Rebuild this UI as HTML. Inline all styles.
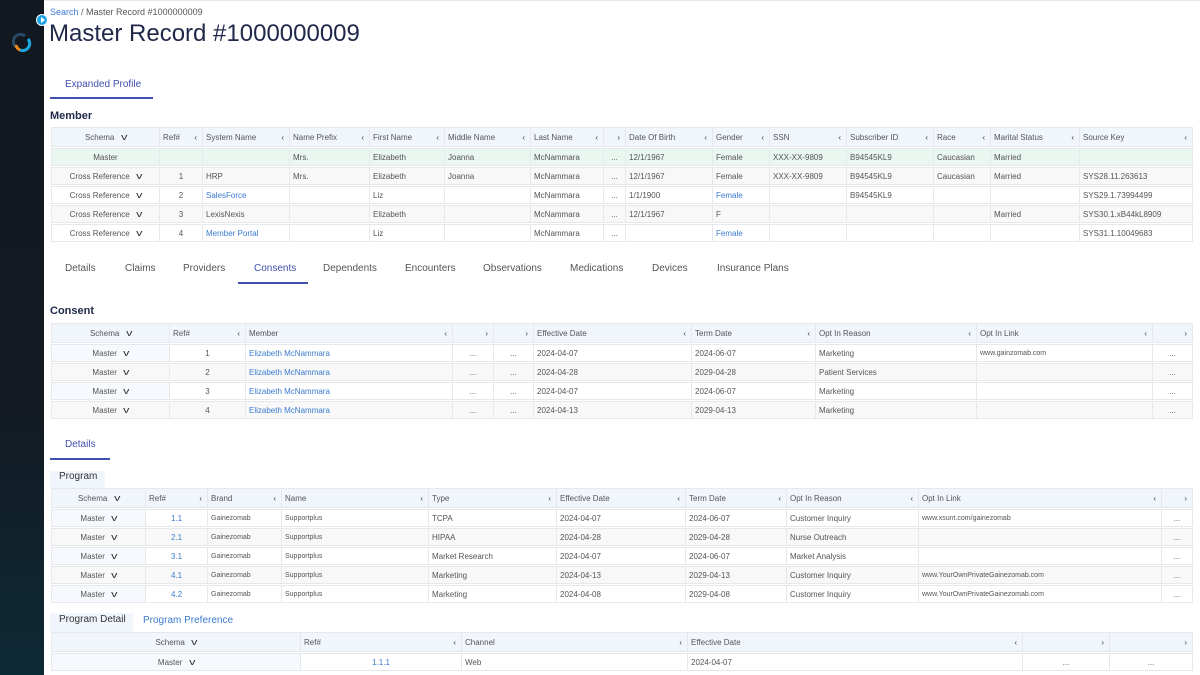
<!DOCTYPE html><html><head><meta charset="utf-8"><style>
*{margin:0;padding:0;box-sizing:border-box}
body{width:1200px;height:675px;overflow:hidden;background:#fff;font-family:"Liberation Sans",sans-serif;color:#444;position:relative}
.side{position:absolute;left:0;top:0;width:44px;height:675px;background:linear-gradient(#121820 0,#131a22 60%,#10222c 80%,#0c2a36 100%)}
.abs{position:absolute;white-space:nowrap}
table{position:absolute;left:51px;width:1142px;border-collapse:separate;border-spacing:0 1px;table-layout:fixed;font-size:8px}
td,th{height:18px;border-top:1px solid #e6e8eb;border-bottom:1px solid #e6e8eb;border-right:1px solid #e6e8eb;padding:0 3px;font-weight:normal;text-align:left;white-space:nowrap;overflow:hidden;color:#555}
th{height:20px;background:#f1f6fc;color:#555;position:relative}
td:first-child,th:first-child{border-left:1px solid #e6e8eb;text-align:center}
tr.g td{background:#eaf6f0}
tr.a td{background:#f8f8f8}
tr.b td{background:#fff}
tr.c td:first-child,tr.c td.l{background:#f6f9fd}
.r{text-align:right;padding-right:6px}
.c{text-align:center}
.lk{color:#3b7bd0}
.ar{position:absolute;right:5px;top:5px;font-size:8px;color:#444}
.tab{position:absolute;top:263px;font-size:10px;color:#555}
.v{display:inline-block;font-size:9px;margin-left:5px;transform:scaleX(1.4);color:#333}
</style></head><body>
<div class="side">
<svg style="position:absolute;left:12px;top:33px" width="20" height="20" viewBox="0 0 20 20"><path d="M4 14A7 7 0 0 1 13 3" stroke="#2a4a66" stroke-width="3" fill="none"/><path d="M16 6A7 7 0 0 1 8 17" stroke="#1aa8e0" stroke-width="3" fill="none"/><path d="M8 17A7 7 0 0 1 4 12" stroke="#f08a1c" stroke-width="3" fill="none"/></svg>
</div>
<div class="abs" style="left:36px;top:14px;width:12px;height:12px;border-radius:6px;background:#1ca3e6;border:1px solid #fff"></div>
<div class="abs" style="left:41px;top:17px;width:0;height:0;border-left:4px solid #fff;border-top:3px solid transparent;border-bottom:3px solid transparent"></div>
<div class="abs" style="left:44px;top:0;width:1156px;height:1px;background:#e8e8e8"></div>
<div class="abs" style="left:50px;top:7px;font-size:9px;color:#555"><span style="color:#3b7bd0">Search</span> / Master Record #1000000009</div>
<div class="abs" style="left:49px;top:20px;font-size:24px;color:#1f2848">Master Record #1000000009</div>
<div class="abs" style="left:65px;top:79px;font-size:10px;color:#4050b0">Expanded Profile</div>
<div class="abs" style="left:50px;top:97px;width:103px;height:2px;background:#4050b0"></div>
<div class="abs" style="left:50px;top:110px;font-size:11px;font-weight:bold;color:#1f2848">Member</div>

<table style="top:126px">
<colgroup><col style="width:109px"><col style="width:43px"><col style="width:87px"><col style="width:80px"><col style="width:75px"><col style="width:86px"><col style="width:73px"><col style="width:22px"><col style="width:87px"><col style="width:57px"><col style="width:77px"><col style="width:87px"><col style="width:57px"><col style="width:89px"><col style="width:113px"></colgroup>
<tr><th>Schema <span class="v">v</span></th><th>Ref#<span class="ar">‹</span></th><th>System Name<span class="ar">‹</span></th><th>Name Prefix<span class="ar">‹</span></th><th>First Name<span class="ar">‹</span></th><th>Middle Name<span class="ar">‹</span></th><th>Last Name<span class="ar">‹</span></th><th><span class="ar">›</span></th><th>Date Of Birth<span class="ar">‹</span></th><th>Gender<span class="ar">‹</span></th><th>SSN<span class="ar">‹</span></th><th>Subscriber ID<span class="ar">‹</span></th><th>Race<span class="ar">‹</span></th><th>Marital Status<span class="ar">‹</span></th><th>Source Key<span class="ar">‹</span></th></tr>
<tr class="g"><td>Master</td><td></td><td></td><td>Mrs.</td><td>Elizabeth</td><td>Joanna</td><td>McNammara</td><td class="c">...</td><td>12/1/1967</td><td>Female</td><td>XXX-XX-9809</td><td>B94545KL9</td><td>Caucasian</td><td>Married</td><td></td></tr>
<tr class="a"><td>Cross Reference <span class="v">v</span></td><td class="c">1</td><td>HRP</td><td>Mrs.</td><td>Elizabeth</td><td>Joanna</td><td>McNammara</td><td class="c">...</td><td>12/1/1967</td><td>Female</td><td>XXX-XX-9809</td><td>B94545KL9</td><td>Caucasian</td><td>Married</td><td>SYS28.11.263613</td></tr>
<tr class="b"><td>Cross Reference <span class="v">v</span></td><td class="c">2</td><td class="lk">SalesForce</td><td></td><td>Liz</td><td></td><td>McNammara</td><td class="c">...</td><td>1/1/1900</td><td class="lk">Female</td><td></td><td>B94545KL9</td><td></td><td></td><td>SYS29.1.73994499</td></tr>
<tr class="a"><td>Cross Reference <span class="v">v</span></td><td class="c">3</td><td>LexisNexis</td><td></td><td>Elizabeth</td><td></td><td>McNammara</td><td class="c">...</td><td>12/1/1967</td><td>F</td><td></td><td></td><td></td><td>Married</td><td>SYS30.1.xB44kL8909</td></tr>
<tr class="b"><td>Cross Reference <span class="v">v</span></td><td class="c">4</td><td class="lk">Member Portal</td><td></td><td>Liz</td><td></td><td>McNammara</td><td class="c">...</td><td></td><td class="lk">Female</td><td></td><td></td><td></td><td></td><td>SYS31.1.10049683</td></tr>
</table>

<div class="tab" style="left:65px">Details</div>
<div class="tab" style="left:125px">Claims</div>
<div class="tab" style="left:183px">Providers</div>
<div class="tab" style="left:254px;color:#4050b0">Consents</div>
<div class="tab" style="left:323px">Dependents</div>
<div class="tab" style="left:405px">Encounters</div>
<div class="tab" style="left:483px">Observations</div>
<div class="tab" style="left:570px">Medications</div>
<div class="tab" style="left:652px">Devices</div>
<div class="tab" style="left:717px">Insurance Plans</div>
<div class="abs" style="left:238px;top:282px;width:70px;height:2px;background:#4050b0"></div>

<div class="abs" style="left:50px;top:305px;font-size:11px;font-weight:bold;color:#1f2848">Consent</div>
<table style="top:322px">
<colgroup><col style="width:119px"><col style="width:76px"><col style="width:207px"><col style="width:41px"><col style="width:40px"><col style="width:158px"><col style="width:124px"><col style="width:161px"><col style="width:176px"><col style="width:40px"></colgroup>
<tr><th>Schema <span class="v">v</span></th><th>Ref#<span class="ar">‹</span></th><th>Member<span class="ar">‹</span></th><th><span class="ar">›</span></th><th><span class="ar">›</span></th><th>Effective Date<span class="ar">‹</span></th><th>Term Date<span class="ar">‹</span></th><th>Opt In Reason<span class="ar">‹</span></th><th>Opt In Link<span class="ar">‹</span></th><th><span class="ar">›</span></th></tr>
<tr class="b c"><td>Master <span class="v">v</span></td><td class="c">1</td><td class="lk">Elizabeth McNammara</td><td class="c">...</td><td class="c">...</td><td>2024-04-07</td><td>2024-06-07</td><td>Marketing</td><td style="font-size:7px">www.gainzomab.com</td><td class="c">...</td></tr>
<tr class="a"><td>Master <span class="v">v</span></td><td class="c">2</td><td class="lk">Elizabeth McNammara</td><td class="c">...</td><td class="c">...</td><td>2024-04-28</td><td>2029-04-28</td><td>Patient Services</td><td></td><td class="c">...</td></tr>
<tr class="b c"><td>Master <span class="v">v</span></td><td class="c">3</td><td class="lk">Elizabeth McNammara</td><td class="c">...</td><td class="c">...</td><td>2024-04-07</td><td>2024-06-07</td><td>Marketing</td><td></td><td class="c">...</td></tr>
<tr class="a"><td>Master <span class="v">v</span></td><td class="c">4</td><td class="lk">Elizabeth McNammara</td><td class="c">...</td><td class="c">...</td><td>2024-04-13</td><td>2029-04-13</td><td>Marketing</td><td></td><td class="c">...</td></tr>
</table>

<div class="abs" style="left:65px;top:439px;font-size:10px;color:#4050b0">Details</div>
<div class="abs" style="left:50px;top:458px;width:60px;height:2px;background:#4050b0"></div>
<div class="abs" style="left:50px;top:471px;width:55px;height:17px;background:#f1f6fc"></div>
<div class="abs" style="left:59px;top:471px;font-size:10px;color:#333">Program</div>
<table style="top:487px">
<colgroup><col style="width:95px"><col style="width:62px"><col style="width:74px"><col style="width:147px"><col style="width:128px"><col style="width:129px"><col style="width:101px"><col style="width:132px"><col style="width:243px"><col style="width:31px"></colgroup>
<tr><th>Schema <span class="v">v</span></th><th>Ref#<span class="ar">‹</span></th><th>Brand<span class="ar">‹</span></th><th>Name<span class="ar">‹</span></th><th>Type<span class="ar">‹</span></th><th>Effective Date<span class="ar">‹</span></th><th>Term Date<span class="ar">‹</span></th><th>Opt In Reason<span class="ar">‹</span></th><th>Opt In Link<span class="ar">‹</span></th><th><span class="ar">›</span></th></tr>
<tr class="b c"><td>Master <span class="v">v</span></td><td class="c lk">1.1</td><td style="font-size:7px">Gainezomab</td><td style="font-size:7px">Supportplus</td><td>TCPA</td><td>2024-04-07</td><td>2024-06-07</td><td>Customer Inquiry</td><td style="font-size:7px">www.xsunt.com/gainezomab</td><td class="c">...</td></tr>
<tr class="a"><td>Master <span class="v">v</span></td><td class="c lk">2.1</td><td style="font-size:7px">Gainezomab</td><td style="font-size:7px">Supportplus</td><td>HIPAA</td><td>2024-04-28</td><td>2029-04-28</td><td>Nurse Outreach</td><td></td><td class="c">...</td></tr>
<tr class="b c"><td>Master <span class="v">v</span></td><td class="c lk">3.1</td><td style="font-size:7px">Gainezomab</td><td style="font-size:7px">Supportplus</td><td>Market Research</td><td>2024-04-07</td><td>2024-06-07</td><td>Market Analysis</td><td></td><td class="c">...</td></tr>
<tr class="a"><td>Master <span class="v">v</span></td><td class="c lk">4.1</td><td style="font-size:7px">Gainezomab</td><td style="font-size:7px">Supportplus</td><td>Marketing</td><td>2024-04-13</td><td>2029-04-13</td><td>Customer Inquiry</td><td style="font-size:7px">www.YourOwnPrivateGainezomab.com</td><td class="c">...</td></tr>
<tr class="b c"><td>Master <span class="v">v</span></td><td class="c lk">4.2</td><td style="font-size:7px">Gainezomab</td><td style="font-size:7px">Supportplus</td><td>Marketing</td><td>2024-04-08</td><td>2029-04-08</td><td>Customer Inquiry</td><td style="font-size:7px">www.YourOwnPrivateGainezomab.com</td><td class="c">...</td></tr>
</table>

<div class="abs" style="left:50px;top:613px;width:83px;height:19px;background:#f1f6fc"></div>
<div class="abs" style="left:59px;top:614px;font-size:10px;color:#333">Program Detail</div>
<div class="abs" style="left:143px;top:615px;font-size:10px;color:#3b7bd0">Program Preference</div>
<table style="top:631px">
<colgroup><col style="width:250px"><col style="width:161px"><col style="width:226px"><col style="width:335px"><col style="width:87px"><col style="width:83px"></colgroup>
<tr><th>Schema <span class="v">v</span></th><th>Ref#<span class="ar">‹</span></th><th>Channel<span class="ar">‹</span></th><th>Effective Date<span class="ar">‹</span></th><th><span class="ar">›</span></th><th><span class="ar">›</span></th></tr>
<tr class="b c"><td>Master <span class="v">v</span></td><td class="c lk">1.1.1</td><td>Web</td><td>2024-04-07</td><td class="c">...</td><td class="c">...</td></tr>
</table>
</body></html>
